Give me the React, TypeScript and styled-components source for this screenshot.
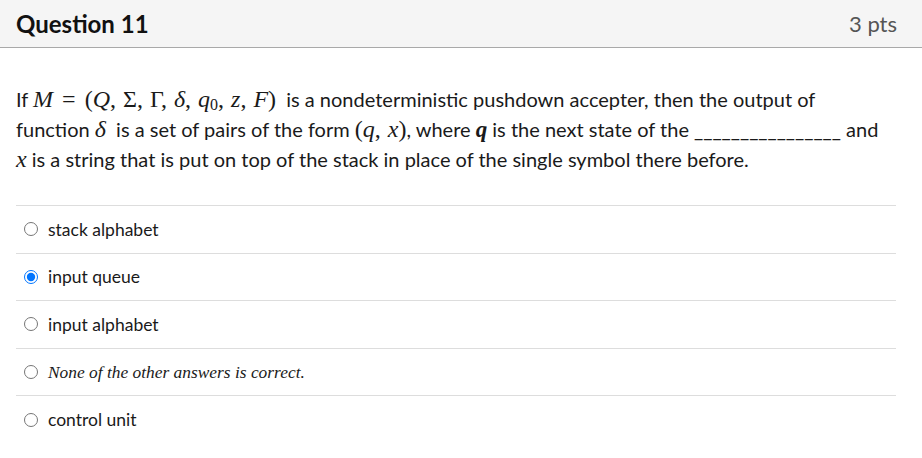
import React from "react";
import styled, { createGlobalStyle } from "styled-components";

const GlobalStyle = createGlobalStyle`
  html, body {
    margin: 0;
    padding: 0;
    background: #ffffff;
  }
  body {
    font-family: Lato, "Liberation Sans", sans-serif;
    color: #2d3b45;
  }
`;

type Answer = { id: string; label: string; checked?: boolean; serif?: boolean };

const answers: Answer[] = [
  { id: "a1", label: "stack alphabet" },
  { id: "a2", label: "input queue", checked: true },
  { id: "a3", label: "input alphabet" },
  { id: "a4", label: "None of the other answers is correct.", serif: true },
  { id: "a5", label: "control unit" },
];

export default function App() {
  return (
    <>
      <GlobalStyle />
      <Card>
        <Header>
          <Title>Question 11</Title>
          <Points>3 pts</Points>
        </Header>
        <Body>
          <QuestionText>
            If{" "}
            <Math>
              <I>M</I>
              <Op>=</Op>(<I>Q</I>,<Sp />Σ,<Sp />Γ,<Sp />
              <I>δ</I>,<Sp />
              <I>q</I>
              <Sub>0</Sub>,<Sp />
              <I>z</I>,<Sp />
              <I>F</I>)
            </Math>{" "}
            is a nondeterministic pushdown accepter, then the output of function{" "}
            <Math>
              <I>δ</I>
            </Math>{" "}
            is a set of pairs of the form{" "}
            <Math $tight>
              (<I>q</I>,<Sp />
              <I>x</I>)
            </Math>
            , where <BoldQ>q</BoldQ> is the next state of the ________________ and{" "}
            <Math $tight>
              <I>x</I>
            </Math>{" "}
            is a string that is put on top of the stack in place of the single symbol there before.
          </QuestionText>
          <AnswerList>
            {answers.map((a) => (
              <AnswerRow key={a.id}>
                <Radio type="radio" name="q11" id={a.id} defaultChecked={a.checked} />
                <AnswerLabel htmlFor={a.id} $serif={a.serif}>
                  {a.label}
                </AnswerLabel>
              </AnswerRow>
            ))}
          </AnswerList>
        </Body>
      </Card>
    </>
  );
}

const Card = styled.div`
  width: 100%;
`;

const Header = styled.div`
  display: flex;
  align-items: center;
  justify-content: space-between;
  height: 47px;
  padding: 0 25px 0 16px;
  background: #f5f5f5;
  border-bottom: 1px solid #a9a9a9;
  box-sizing: content-box;
`;

const Title = styled.h2`
  margin: 0;
  font-size: 24px;
  font-weight: 700;
  color: #111;
`;

const Points = styled.div`
  font-size: 22px;
  color: #555;
`;

const Body = styled.div`
  padding: 36px 36px 0 16px;
`;

const QuestionText = styled.p`
  margin: 0 0 31px;
  font-size: 20px;
  line-height: 30px;
  color: #1a1a1a;
`;

const Math = styled.span<{ $tight?: boolean }>`
  font-family: "Liberation Serif", "DejaVu Serif", serif;
  font-size: 24px;
  line-height: 0;
  white-space: nowrap;
  margin-right: ${(p) => (p.$tight ? "0" : "5px")};
`;

const I = styled.span`
  font-style: italic;
`;

const Op = styled.span`
  padding: 0 9px;
`;

const Sp = styled.span`
  display: inline-block;
  width: 7px;
`;

const Sub = styled.sub`
  font-size: 16px;
  line-height: 0;
  vertical-align: -3px;
`;

const BoldQ = styled.span`
  font-family: "Liberation Serif", serif;
  font-style: italic;
  font-weight: 700;
  font-size: 23px;
  line-height: 0;
`;

const AnswerList = styled.div`
  display: flex;
  flex-direction: column;
  margin-right: -10px;
`;

const AnswerRow = styled.div`
  display: flex;
  align-items: center;
  gap: 10px;
  height: 47.6px;
  box-sizing: border-box;
  border-top: 1px solid #dddddd;
  padding-left: 8px;
`;

const Radio = styled.input`
  width: 14px;
  height: 14px;
  margin: 0;
`;

const AnswerLabel = styled.label<{ $serif?: boolean }>`
  font-family: ${(p) => (p.$serif ? '"Liberation Serif", serif' : 'Lato, "Liberation Sans", sans-serif')};
  font-style: ${(p) => (p.$serif ? "italic" : "normal")};
  font-size: ${(p) => (p.$serif ? "17.4px" : "17.5px")};
  color: #1a1a1a;
`;
